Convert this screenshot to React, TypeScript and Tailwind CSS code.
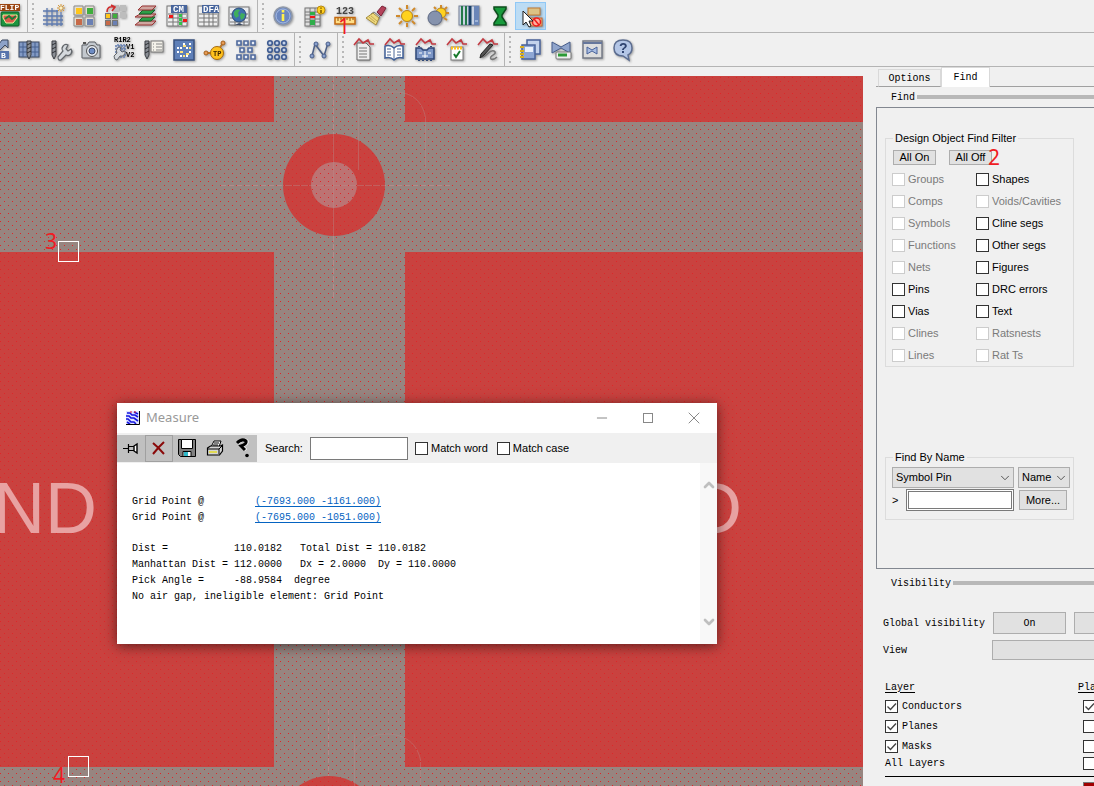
import { useState } from 'react'
import type { ReactNode } from 'react'
import { Minus, X, ChevronDown, ChevronUp } from 'lucide-react'

const SANS = "font-['Liberation_Sans',Arial,sans-serif] text-[11px]"
const MONO = "font-['Liberation_Mono',monospace] text-[10px]"

interface Tool {
  name: string
  art: ReactNode
  active?: boolean
}

const B = '#5f7bb0'
const D = '#3d4a63'

const redWave = <path d="M3 7 8 1l4 4 5-3 2 4h4" fill="none" stroke="#c23a42" strokeWidth="1.6" />
const via = (x: number) => (
  <g>
    <path d={`M${x} 3h4v14l-2 4-2-4z`} fill="#8b8f96" stroke="#3c3f44" />
    <path d={`M${x} 7l4-2M${x} 11l4-2M${x} 15l4-2`} stroke="#2d2f33" />
  </g>
)
const wrench = (
  <path d="m10 19 5-6a4 4 0 0 1 5-6l-2 4 2 2 3-2a4 4 0 0 1-5 6l-5 5q-3 1-3-3z" fill="#d5d9dd" stroke="#62666b" strokeWidth="1.2" />
)
const tableCells = (
  <path d="M3 10h18M3 14h18M3 18h18M8 6v16M13 6v16M17 6v16" stroke="#777" fill="none" />
)

const ROW1: Tool[][] = [
  [
    { name: 'Flip board', art: (
      <>
        <rect x="4" y="8" width="18" height="14" rx="1" fill="#1d9440" stroke="#0e5c26" />
        <path d="M6 11h14v3l-4 5H9l-3-5z" fill="#db5a4b" stroke="#f3e9a0" />
        <path d="m8 15 4-3 3 3 4-3" stroke="#1d7a35" strokeWidth="2" fill="none" />
        <rect x="2" y="0" width="21" height="7" fill="#9a4410" />
        <text x="3" y="6" fontSize="8" fontWeight="bold" fill="#fff" fontFamily="Liberation Mono">FLIP</text>
      </>
    ) },
  ],
  [
    { name: 'Grid toggle', art: (
      <>
        <path d="M6 4v18M11 4v18M16 6v16M20 8v14M2 7h15M2 12h20M2 16h20M2 20h20" stroke={B} strokeWidth="1.3" />
        <path d="M20 0v8M16 4h8M17 1l6 6M23 1l-6 6" stroke="#d99a3a" />
        <circle cx="20" cy="4" r="1.5" fill="#fff3c0" />
      </>
    ) },
    { name: 'Color dialog', art: (
      <>
        <path d="M2 2h9v9H2zM13 2h9v9h-9zM2 13h9v9H2zM13 13h9v9h-9z" fill="#e4dfd2" stroke="#8b8b8b" />
        <rect x="4" y="4" width="6" height="6" fill="#ffc61a" />
        <rect x="15" y="4" width="6" height="6" fill="#3fae3c" />
        <rect x="4" y="15" width="6" height="6" fill="#c76a48" />
        <rect x="15" y="15" width="6" height="6" fill="#6a80b4" />
      </>
    ) },
    { name: 'Swap colors', art: (
      <>
        <path d="M10 1h6v6h-6zM17 1h6v6h-6zM17 8h6v6h-6z" fill="#bdbdbd" />
        <g stroke="#777">
          <rect x="2.5" y="9.5" width="5" height="5" fill="#ffc61a" />
          <rect x="9.5" y="9.5" width="5" height="5" fill="#3fae3c" />
          <rect x="2.5" y="16.5" width="5" height="5" fill="#c76a48" />
          <rect x="9.5" y="16.5" width="5" height="5" fill="#6a80b4" />
        </g>
        <path d="M4 8c0-4 2-6 7-5M8 1l4 2-3 4" fill="none" stroke="#cf2c2c" strokeWidth="1.6" />
      </>
    ) },
    { name: 'Cross section', art: (
      <>
        <path d="m1 21 5-4h16l-4 4z" fill="#cfa6a0" stroke="#9a3434" />
        <path d="m5 17 4-4h12l-4 4z" fill="#2e9e48" stroke="#17602a" />
        <path d="m1 13 5-3h16l-4 3z" fill="#cfa6a0" stroke="#9a3434" />
        <path d="m5 10 4-4h12l-4 4z" fill="#2e9e48" stroke="#17602a" />
        <path d="m4 6 4-4h14l-4 4z" fill="#cfa6a0" stroke="#9a3434" />
      </>
    ) },
    { name: 'Constraint manager', art: (
      <>
        <rect x="2" y="2" width="20" height="20" fill="#eee" stroke="#777" />
        {tableCells}
        <path d="M14 10h3v3h-3zM14 14h3v3h-3zM14 18h3v3h-3z" fill="#35c04a" />
        <path d="M4 11h4v3H4zM18 15h4v3h-4z" fill="#f01818" />
        <rect x="6" y="1" width="16" height="8" fill="#47659c" />
        <text x="8" y="8" fontSize="9" fontWeight="bold" fill="#fff" fontFamily="Liberation Mono">CM</text>
      </>
    ) },
    { name: 'DFA table', art: (
      <>
        <rect x="2" y="2" width="20" height="20" fill="#eee" stroke="#777" />
        {tableCells}
        <rect x="6" y="1" width="17" height="8" fill="#47659c" />
        <text x="7" y="8" fontSize="9" fontWeight="bold" fill="#fff" fontFamily="Liberation Mono">DFA</text>
      </>
    ) },
    { name: 'DRC world', art: (
      <>
        <rect x="2" y="3" width="20" height="18" fill="#e8eaee" stroke="#777" />
        {tableCells}
        <circle cx="12" cy="11" r="7" fill="#3f6fae" stroke="#2a4a78" />
        <path d="M7 8c2-3 4-3 6-2l-2 3 1 3-3 2-2-3zM14 9l4 1-1 4-3 2-1-4z" fill="#3fae5c" />
        <path d="M8 21h8l-4-2z" fill={D} />
      </>
    ) },
  ],
  [
    { name: 'Show element', art: (
      <>
        <circle cx="12" cy="12" r="9" fill="#6b87c0" stroke="#8f98a8" strokeWidth="1.5" />
        <circle cx="12" cy="12" r="7" fill="none" stroke="#a9bce0" />
        <path d="M12 6v2.500M12 10v7" stroke="#fff04a" strokeWidth="2.600" />
      </>
    ) },
    { name: 'Show properties', art: (
      <>
        <rect x="3" y="4" width="15" height="18" fill="#ddd" stroke="#777" />
        <path d="M3 8h15M3 11h15M3 15h15M3 18h15M8 4v18M13 4v18" stroke="#777" />
        <path d="M8 8h5v3H8zM8 16h5v5H8z" fill="#2fae4a" />
        <path d="M8 12h5v2H8z" fill="#f01818" />
        <circle cx="19" cy="6" r="4" fill="#ffd01e" stroke="#b88a10" />
        <path d="M19 3.500v1.200M19 6v3" stroke="#704d00" strokeWidth="1.400" />
      </>
    ) },
    { name: 'Measure', art: (
      <>
        <text x="3" y="10" fontSize="10" fontWeight="bold" fill="#444" fontFamily="Liberation Mono">123</text>
        <rect x="2" y="13.500" width="20" height="6.500" fill="#ffdf8a" stroke="#c46a10" strokeWidth="1.500" />
        <path d="M5 14v3M8 14v2M11 14v3M14 14v2M17 14v3M20 14v2" stroke="#8a4a08" />
      </>
    ) },
    { name: 'Highlight', art: (
      <>
        <path d="m13 8 5-6 4 2-5 8z" fill="#b5425a" stroke="#7c2438" />
        <path d="m10 8 6 5-2 3-7-6z" fill="#ddd" stroke="#777" />
        <path d="m9 9 6 5-3 7L2 14z" fill="#efd97c" stroke="#a58c3a" />
        <path d="m5 13 6 5M7 12l6 5" stroke="#c5ab58" />
      </>
    ) },
    { name: 'Dehighlight', art: (
      <>
        <path d="M12 1v4M12 19v4M1 12h4M19 12h4M4 4l3 3M17 17l3 3M20 4l-3 3M4 20l3-3" stroke="#d08a2c" strokeWidth="2" />
        <circle cx="12" cy="12" r="5.500" fill="#ffd21f" stroke="#b98218" />
      </>
    ) },
    { name: 'Shadow mode', art: (
      <>
        <path d="M15 1v3M23 9h-3M21 3l-3 3M8 3l2 2M21 16l-3-2" stroke="#d08a2c" strokeWidth="2" />
        <circle cx="15" cy="9" r="5" fill="#ffd21f" stroke="#b98218" />
        <circle cx="9" cy="14" r="7" fill="#8592ad" stroke="#5c6883" />
      </>
    ) },
    { name: 'Layer colors', art: (
      <>
        <rect x="2" y="2" width="20" height="19" fill="#c9d3e4" stroke="#77829a" />
        <path d="M5 2v19M9 2v19" stroke="#237a4a" strokeWidth="2" />
        <path d="M13 2v19" stroke="#173f66" strokeWidth="3" />
        <path d="M17 2h5v19h-5z" fill="#6a86b8" />
        <path d="M18 17h3" stroke="#d4e2f8" />
      </>
    ) },
    { name: 'Waive DRC', art: (
      <path d="M6 3h12v2l-4 6v2l4 6v2H6v-2l4-6v-2L6 5z" fill="#189a3c" stroke="#0c4d1c" strokeWidth="1.500" />
    ) },
    { name: 'Selection filter', active: true, art: (
      <>
        <rect x="9" y="4" width="12" height="7" fill="#dcc184" stroke="#c07a34" />
        <rect x="11" y="14" width="12" height="8" fill="#e9b184" stroke="#c0642c" />
        <circle cx="17.500" cy="18" r="4" fill="#ffb0a0" stroke="#ee1c1c" strokeWidth="1.500" />
        <path d="m15 15 5 6" stroke="#ee1c1c" strokeWidth="1.500" />
        <path d="M4 7v14l3-3 3 5 2-1-2-5h4z" fill="#fff" stroke="#222" />
      </>
    ) },
  ],
]

const ROW2: Tool[][] = [
  [
    { name: 'Back annotate', art: (
      <>
        <path d="m10 10 6-8h6v8l-3-3-6 6z" fill="#8da2c8" stroke={D} />
        <rect x="11" y="13" width="12" height="8" fill="#5874ac" />
        <text x="15" y="20" fontSize="8" fontWeight="bold" fill="#fff" fontFamily="Liberation Mono">B</text>
      </>
    ) },
    { name: 'Via structure', art: (
      <>
        <rect x="2" y="4" width="20" height="15" fill="#8199c4" stroke={D} />
        <path d="M2 9h20M2 14h20M6 4v15M18 4v15" stroke="#46608f" />
        {via(10)}
      </>
    ) },
    { name: 'Padstack edit', art: <>{via(4)}{wrench}</> },
    { name: 'Snapshot', art: (
      <>
        <path d="M3 7h5l2-3h6l2 3h3v13H3z" fill="#c3c8ce" stroke="#5c6066" />
        <circle cx="13" cy="13" r="5.500" fill="#e6eaf0" stroke="#555" />
        <circle cx="13" cy="13" r="3" fill="#6d8cc4" stroke="#3c4a66" />
        <path d="M4 5h3" stroke="#555" strokeWidth="2" />
      </>
    ) },
    { name: 'Refdes wrench', art: (
      <>
        <path d="M8 6v14M11 6v14M14 6v14M5 8h11M5 11h11M5 14h11M5 17h11" stroke={B} strokeWidth="1.300" strokeDasharray="2 1" />
        <g fontSize="7" fontWeight="bold" fill="#000" fontFamily="Liberation Mono">
          <text x="4" y="4">R1R2</text>
          <text x="16" y="11">V1</text>
          <text x="16" y="19">V2</text>
        </g>
        <path d="m4 18 3-3a4 4 0 0 1 4-6l-1 3 2 2 3-1a4 4 0 0 1-5 5l-3 4q-3 0-3-4z" fill="#d5d9dd" stroke="#62666b" />
      </>
    ) },
    { name: 'Padstack report', art: (
      <>
        {via(4)}
        <rect x="10" y="3" width="12" height="11" fill="#f4f2ea" stroke="#777" />
        <path d="M12 6h1M15 6h6M12 9h1M15 9h6M12 12h1M15 12h6" stroke="#888" />
      </>
    ) },
    { name: 'Ball map', art: (
      <>
        <rect x="2" y="2" width="20" height="20" fill="#5f80b8" stroke="#3a527f" strokeWidth="1.500" />
        <path d="M11 6h2M17 6h2M5 10h2M8 10h2M14 10h2M5 14h2M17 14h2M8 18h2M14 18h2" stroke="#fff" strokeWidth="2" />
        <path d="M11 8h3M8 14h3M14 16h3M11 18h2M17 10h2" stroke="#ffe27a" strokeWidth="2" />
      </>
    ) },
    { name: 'Test point', art: (
      <>
        <path d="M3 15h6l5-1 6-9" fill="none" stroke="#b9742a" strokeWidth="2" />
        <circle cx="20" cy="5" r="2" fill="#e79b55" stroke="#a5601c" />
        <circle cx="3" cy="15" r="2" fill="#e79b55" stroke="#a5601c" />
        <circle cx="14" cy="15" r="6.500" fill="#ffc21e" stroke="#a56a10" />
        <text x="10" y="18" fontSize="7" fontWeight="bold" fill="#402800" fontFamily="Liberation Mono">TP</text>
      </>
    ) },
    { name: 'Place array', art: (
      <g fill="#e8edf6" stroke="#4f6a9e" strokeWidth="1.600">
        <path d="M3 3h4v4H3zM10 3h4v4h-4zM17 3h4v4h-4zM6 10h4v4H6zM14 10h4v4h-4zM3 17h4v4H3zM10 17h4v4h-4zM17 17h4v4h-4z" />
      </g>
    ) },
    { name: 'Place grid', art: (
      <g fill="#c5d3ea" stroke="#3f5c92" strokeWidth="1.600">
        {[5, 12, 19].map(y => [5, 12, 19].map(x => <circle key={`${x}-${y}`} cx={x} cy={y} r="2.300" />))}
      </g>
    ) },
  ],
  [
    { name: 'Net schedule', art: (
      <>
        <path d="M4 18 7 6l9 12 4-13" fill="none" stroke="#4c5f86" strokeWidth="1.500" />
        <g fill="#8aa0cc" stroke="#4a5f8c">
          <circle cx="4" cy="18" r="2" /><circle cx="8" cy="6" r="2" /><circle cx="16" cy="18" r="2" /><circle cx="20" cy="6" r="2" />
        </g>
      </>
    ) },
  ],
  [
    { name: 'Signal report', art: (
      <>
        <path d="M6 5h9l4 4v13H6z" fill="#eee" stroke="#666" />
        <path d="M8 10h8M8 13h8M8 16h8M8 19h8" stroke="#777" />{redWave}
      </>
    ) },
    { name: 'Signal library', art: (
      <>
        <path d="M3 8c4-1 7 0 9 2 2-2 5-3 9-2v12c-4-1-7 0-9 2-2-2-5-3-9-2z" fill="#fff" stroke="#3f5f98" strokeWidth="1.500" />
        <path d="M12 10v11M5 11h4M5 14h4M5 17h4M15 11h4M15 14h4M15 17h4" stroke="#4c6898" />{redWave}
      </>
    ) },
    { name: 'Signal model', art: (
      <>
        <path d="M3 10h5l2 2h4l2-2h5v11H3z" fill="#7c96c6" stroke="#2f4878" strokeWidth="1.500" />
        <path d="M6 15h3M15 15h3M12 13v7M9 18h6" stroke="#fff" />
        <path d="M6 22v1M10 22v1M14 22v1M18 22v1M6 9V8M18 9V8" stroke="#2f4878" strokeWidth="2" />{redWave}
      </>
    ) },
    { name: 'Signal audit', art: (
      <>
        <rect x="7" y="9" width="12" height="13" fill="#fff" stroke="#777" />
        <path d="M7 10h12" stroke="#ffc21e" strokeWidth="3" strokeDasharray="2 1" />
        <path d="m10 16 2 3 4-6" fill="none" stroke="#187a2c" strokeWidth="2" />{redWave}
      </>
    ) },
    { name: 'Signal probe', art: (
      <>
        <path d="M6 19c5 1 8-8 13-6 5 3-6 5-3 8 2 1 4 0 6-2" fill="none" stroke="#777" strokeWidth="1.500" />
        <path d="m18 7-9 10-4 3 1-4 9-10z" fill="#555" stroke="#222" />{redWave}
      </>
    ) },
  ],
  [
    { name: 'Cascade windows', art: (
      <>
        <rect x="9" y="2" width="13" height="14" fill="#c3d2ec" stroke="#49639a" strokeWidth="1.500" />
        <rect x="4" y="7" width="13" height="14" fill="#8fa7d4" stroke="#49639a" strokeWidth="1.500" />
        <path d="M7 9h8v5H7z" fill="#e9f0fb" />
        <path d="M2 9h4M2 13h4M2 16h4M2 19h4" stroke="#d9ae1e" strokeWidth="2" />
      </>
    ) },
    { name: 'Simulation progress', art: (
      <>
        <path d="m3 4 9 5 9-5v11l-9-5-9 5z" fill="#90a5cc" stroke="#465c8a" />
        <rect x="7" y="14" width="15" height="7" rx="1" fill="#eee" stroke="#777" />
        <path d="M9 17h9" stroke="#2c9a36" strokeWidth="3" />
      </>
    ) },
    { name: 'Simulation window', art: (
      <>
        <rect x="3" y="3" width="19" height="17" fill="#ddd" stroke="#747a86" strokeWidth="1.500" />
        <path d="M3 5h19" stroke="#66779c" strokeWidth="2" />
        <path d="m7 9 5 3 5-3v7l-5-3-5 3z" fill="#a9bde2" stroke="#49639a" />
      </>
    ) },
    { name: 'Help', art: (
      <>
        <path d="M12 2c6 0 9 3 9 8 0 4-2 6-4 7l1 5-6-4c-6 0-9-3-9-8s3-8 9-8z" fill="#b4c6e6" stroke="#5c6d90" strokeWidth="1.500" />
        <text x="8" y="15" fontSize="14" fontWeight="bold" fill="#2f4370" fontFamily="Liberation Sans">?</text>
      </>
    ) },
  ],
]

const FILTERS: Array<[string, boolean, string, boolean]> = [
  ['Groups', false, 'Shapes', true],
  ['Comps', false, 'Voids/Cavities', false],
  ['Symbols', false, 'Cline segs', true],
  ['Functions', false, 'Other segs', true],
  ['Nets', false, 'Figures', true],
  ['Pins', true, 'DRC errors', true],
  ['Vias', true, 'Text', true],
  ['Clines', false, 'Ratsnests', false],
  ['Lines', false, 'Rat Ts', false],
]

function ToolButton({ tool }: { tool: Tool }) {
  return (
    <button
      aria-label={tool.name}
      className={`flex h-7 w-[31px] shrink-0 items-center justify-center ${tool.active ? 'border border-[#90c8f6] bg-[#bcdcf4]' : ''}`}
    >
      <svg viewBox="0 0 24 24" className="size-6 shrink-0 overflow-visible drop-shadow-[1px_1px_1px_rgba(0,0,0,0.35)]">{tool.art}</svg>
    </button>
  )
}

function Toolbar({ groups, className, divider }: { groups: Tool[][]; className: string; divider: string }) {
  return (
    <div className={`flex items-center border-b border-[#b4b4b4] ${className}`}>
      {groups.map((group, i) => (
        <div key={i} className="flex h-full items-center">
          {i > 0 && (
            <div className={`flex h-full gap-1 pr-[3px] ${divider}`}>
              <div className="w-px bg-[#b4b4b4]" />
              <div className="my-[3px] w-[2px] bg-[repeating-linear-gradient(180deg,#b8b8b8_0px,#b8b8b8_2px,#f0f0f0_2px,#f0f0f0_5px)]" />
            </div>
          )}
          {group.map(t => <ToolButton key={t.name} tool={t} />)}
        </div>
      ))}
    </div>
  )
}

function Check({ label, enabled = true, initial = false, hideLabel = false, gap = 'gap-[3px]' }: {
  label: string; enabled?: boolean; initial?: boolean; hideLabel?: boolean; gap?: string
}) {
  const [on, setOn] = useState(initial)
  return (
    <label className={`flex items-center whitespace-nowrap ${gap} ${enabled ? 'text-black' : 'text-[#7a7a7a]'}`}>
      <span className="relative size-[13px] shrink-0">
        <input
          type="checkbox"
          checked={on}
          disabled={!enabled}
          aria-label={hideLabel ? label : undefined}
          onChange={e => setOn(e.target.checked)}
          className="block size-[13px] appearance-none border border-[#333] bg-white disabled:border-[#ccc]"
        />
        {on && (
          <svg viewBox="0 0 13 13" className="pointer-events-none absolute inset-0">
            <path d="m2.500 6.500 3 3 5.500-6" fill="none" stroke="#444" strokeWidth="1.400" />
          </svg>
        )}
      </span>
      {!hideLabel && <span>{label}</span>}
    </label>
  )
}

function Pad({ cx, cy }: { cx: number; cy: number }) {
  return (
    <g>
      <circle cx={cx} cy={cy} r="51" fill="#c9423f" />
      <circle cx={cx} cy={cy} r="23" fill="#bc7373" />
    </g>
  )
}

function BoardCanvas() {
  return (
    <svg className="block h-full w-full" role="img" aria-label="Board layout">
      <defs>
        <pattern id="dots" width="8" height="8" patternUnits="userSpaceOnUse">
          <path d="M0 1h1v1H0zM4 5h1v1H4z" fill="#dd2729" />
        </pattern>
      </defs>
      <rect width="100%" height="100%" fill="#c9423f" />
      <rect x="274" width="131" height="100%" fill="#978580" />
      <rect y="46" width="100%" height="130" fill="#978580" />
      <rect y="691" width="100%" height="130" fill="#978580" />
      <g fill="none" stroke="#b98c8c" strokeOpacity="0.8">
        <path d="M333.500 0v222M220 109.500h231" strokeDasharray="6 2" />
        <path d="M328.500 633v80" strokeDasharray="6 2" />
      </g>
      <Pad cx={334} cy={109} />
      <Pad cx={329} cy={751} />
      <g fill="none" stroke="#b98c8c" strokeOpacity="0.4">
        <path d="M333.500 58v102M283 109.500h102" />
        <path d="M358.500 16v78M358.500 36c8-14 20-20 36-20s28 8 31 26v50" />
        <path d="M354.500 658v60M354.500 676c8-12 18-18 32-18s30 6 34 26v40" />
      </g>
      <rect width="100%" height="100%" fill="url(#dots)" />
      <g fill="#e8a2a2" fontFamily="Liberation Sans" fontSize="72" textAnchor="end">
        <text x="97" y="457">GND</text>
        <text x="742" y="457">GND</text>
      </g>
      <g fill="none" stroke="#fff">
        <rect x="58.500" y="165.500" width="20" height="20" />
        <rect x="68.500" y="680.500" width="20" height="20" />
      </g>
      <g fill="#f01c24" fontFamily="Noto Sans" fontSize="21">
        <text x="45" y="173">3</text>
        <text x="53" y="707">4</text>
      </g>
    </svg>
  )
}

function MeasureWindow() {
  const tile = 'flex h-[27px] w-7 items-center justify-center bg-[#c0c0c0]'
  return (
    <section className="absolute left-[117px] top-[327px] flex h-[241px] w-[600px] flex-col bg-white shadow-[0_2px_12px_rgba(0,0,0,0.55)]">
      <header className="flex h-[30px] shrink-0 items-center pl-[9px]">
        <svg viewBox="0 0 14 14" className="size-[14px]">
          <path d="M0 0h13v13H0z" fill="#dfe4ff" />
          <path d="M1 2h3l2 2h3l3 2M0 5h3l2 2h3l4 3M0 8h2l3 3h3l2 2M8 1l4 2M1 11l3 2" fill="none" stroke="#1414e0" strokeWidth="1.600" />
          <path d="M4 1h2M8 1h2" stroke="#f02020" />
          <path d="M0 13.500h13.500V0" fill="none" stroke="#000" />
        </svg>
        <h2 className="ml-[6px] flex-1 font-['Noto_Sans',sans-serif] text-[13px] text-[#999]">Measure</h2>
        <button aria-label="Minimize" className="flex w-[46px] justify-center text-[#888]"><Minus size={16} strokeWidth={1.5} /></button>
        <button aria-label="Maximize" className="flex w-[46px] justify-center"><span className="size-[10px] border border-[#888]" /></button>
        <button aria-label="Close" className="flex w-[46px] justify-center text-[#888]"><X size={20} strokeWidth={1.2} /></button>
      </header>

      <div className={`flex h-[30px] shrink-0 items-center bg-[#f0f0f0] ${SANS}`}>
        <button aria-label="Pin" className={tile}>
          <svg viewBox="0 0 16 16" className="size-4">
            <path d="M0 8.500h5M5.500 4v9M6 6.500h5M6 10.500h5" fill="none" stroke="#000" strokeWidth="1.200" />
            <path d="m11 6 3-2v9l-3-2z" fill="#fff" stroke="#000" strokeWidth="1.400" />
          </svg>
        </button>
        <button aria-label="Close report" className={`${tile} border border-[#a0a0a0]`}>
          <svg viewBox="0 0 16 16" className="size-4">
            <path d="m2 3 5 4.500L13 14M13 2 8 7l-6 7" fill="none" stroke="#8a0a0a" strokeWidth="2" />
          </svg>
        </button>
        <button aria-label="Save" className={tile}>
          <svg viewBox="0 0 18 18" className="size-[18px]">
            <path d="M.5.500h17v17h-15l-2-2z" fill="#808080" stroke="#000" />
            <path d="M3.500.500h11v9h-11z" fill="#fff" stroke="#000" />
            <path d="M5 12.500h8v5H5z" fill="#fff" stroke="#000" />
            <path d="M6 13h4v4H6z" fill="#30b8c8" />
          </svg>
        </button>
        <button aria-label="Print" className={tile}>
          <svg viewBox="0 0 18 18" className="size-[18px]">
            <path d="m5 8 3-6h7l-2 6" fill="#fff" stroke="#000" />
            <path d="M8 4h5M7 6h5" stroke="#000" />
            <path d="m1.500 9 3-2h10l2-1v6l-3 4h-12z" fill="#d4d4d4" stroke="#000" strokeWidth="1.200" />
            <path d="M2 10h11l3-3M13 10v5" fill="none" stroke="#000" />
            <path d="M3 13h8" stroke="#e6dd28" strokeWidth="1.500" />
          </svg>
        </button>
        <button aria-label="Help" className={tile}>
          <svg viewBox="0 0 16 20" className="h-5 w-4">
            <path d="M3 5q5-5 9-2 1 3-5 5l4 4" fill="none" stroke="#fff" strokeWidth="3" />
            <path d="M2 5q5-5 9-2 1 3-5 5l4 4" fill="none" stroke="#000" strokeWidth="3" />
            <circle cx="12" cy="17.500" r="1.800" fill="#000" />
          </svg>
        </button>
        <label htmlFor="search" className="ml-2 w-[45px]">Search:</label>
        <input id="search" className="mr-[7px] h-[23px] w-[98px] border border-[#7a7a7a] bg-white px-1" />
        <Check label="Match word" />
        <div className="ml-[9px]"><Check label="Match case" /></div>
      </div>

      <div className="flex min-h-0 flex-1">
        <div className={`flex-1 whitespace-pre pl-[15px] pt-[31px] leading-4 text-black ${MONO}`}>
          {['(-7693.000 -1161.000)', '(-7695.000 -1051.000)'].map(point => (
            <div key={point} className="flex">
              <span className="w-[123px]">Grid Point @</span>
              <a href="#point" className="text-[#0563c1] underline underline-offset-2">{point}</a>
            </div>
          ))}
          <p className="mt-[15px]">{'Dist =           110.0182   Total Dist = 110.0182'}</p>
          <p>{'Manhattan Dist = 112.0000   Dx = 2.0000  Dy = 110.0000'}</p>
          <p>{'Pick Angle =     -88.9584  degree'}</p>
          <p>No air gap, ineligible element: Grid Point</p>
        </div>
        <div className="flex w-[17px] flex-col items-center justify-between bg-[#f8f8f8] pb-[14px] pt-[14px] text-[#bfbfbf]">
          <ChevronUp size={16} strokeWidth={4} />
          <ChevronDown size={16} strokeWidth={4} />
        </div>
      </div>
    </section>
  )
}

function PanelTitle({ children }: { children: ReactNode }) {
  return (
    <div className={`flex h-4 items-center gap-[2px] pl-[15px] text-black ${MONO}`}>
      <h3>{children}</h3>
      <div className="h-1 flex-1 bg-[#b8b8b8]" />
    </div>
  )
}

function Dropdown({ label, value, className }: { label: string; value: string; className: string }) {
  return (
    <div className={`relative ${className}`}>
      <select aria-label={label} className="block h-[21px] w-full appearance-none border border-[#adadad] bg-[#e1e1e1] pl-[3px] text-black">
        <option>{value}</option>
      </select>
      <ChevronDown size={14} strokeWidth={1.5} className="pointer-events-none absolute right-[2px] top-1 text-[#444]" />
    </div>
  )
}

function FindPanel() {
  const small = 'block h-[15px] w-[43px] border border-[#adadad] bg-[#e1e1e1] leading-none'
  return (
    <div className={`mt-[2px] border-y border-l border-[#828790] pb-12 pl-2 pt-[22px] text-black ${SANS}`}>
      <fieldset className="w-[189px] border border-[#dcdcdc] pl-[6px]">
        <legend className="ml-px px-[2px] leading-4">Design Object Find Filter</legend>
        <div className="mb-[3px] mt-1 flex gap-[13px] pl-px">
          <button className={small}>All On</button>
          <div className="relative">
            <button className={small}>All Off</button>
            <span className="absolute -top-2 left-[39px] font-['Noto_Sans',sans-serif] text-[21px] leading-[30px] text-[#f01c24]">2</span>
          </div>
        </div>
        {FILTERS.map(([left, leftOn, right, rightOn]) => (
          <div key={left} className="flex h-[22px] items-center">
            <div className="w-[84px]"><Check label={left} enabled={leftOn} /></div>
            <Check label={right} enabled={rightOn} />
          </div>
        ))}
      </fieldset>

      <fieldset className="mt-[82px] w-[189px] border border-[#dcdcdc] pb-2 pl-[6px]">
        <legend className="ml-px px-[2px] leading-4">Find By Name</legend>
        <div className="mt-[2px] flex gap-1">
          <Dropdown label="Object type" value="Symbol Pin" className="w-[122px]" />
          <Dropdown label="Match by" value="Name" className="w-[52px]" />
        </div>
        <div className="mt-px flex items-center">
          <label htmlFor="find-name" className="w-[14px]">&gt;</label>
          <input id="find-name" className="h-[22px] w-[108px] border-[3px] border-double border-[#7a7a7a] bg-white px-1" />
          <button className="ml-[5px] h-5 w-12 border border-[#adadad] bg-[#e1e1e1]">More...</button>
        </div>
      </fieldset>
    </div>
  )
}

function VisibilityPanel() {
  const button = 'shrink-0 border border-[#adadad] bg-[#e1e1e1]'
  const layers: Array<[string, boolean]> = [['Conductors', true], ['Planes', false], ['Masks', false]]
  return (
    <div className={`overflow-hidden whitespace-nowrap pl-[7px] text-black ${MONO}`}>
      <div className="mt-[21px] flex items-center">
        <span className="w-[110px] shrink-0">Global visibility</span>
        <button className={`h-[22px] w-[73px] ${button}`}>On</button>
        <button aria-label="Off" className={`ml-2 h-[22px] w-[73px] ${button}`} />
      </div>
      <div className="mt-[6px] flex items-center">
        <span className="w-[109px] shrink-0">View</span>
        <button aria-label="View" className={`h-5 w-[170px] ${button}`} />
      </div>
      <table className="ml-[2px] mt-[18px] w-[260px] table-fixed text-left">
        <thead>
          <tr className="h-[18px]">
            <th className="w-[198px] font-normal underline underline-offset-2">Layer</th>
            <th className="font-normal underline underline-offset-2"><span className="-ml-[5px]">Planes</span></th>
          </tr>
        </thead>
        <tbody>
          {layers.map(([name, on]) => (
            <tr key={name} className="h-5">
              <td><Check label={name} initial gap="gap-1" /></td>
              <td><Check label={`${name} plane`} initial={on} hideLabel /></td>
            </tr>
          ))}
          <tr className="h-5 border-b border-black">
            <td className="pb-1">All Layers</td>
            <td className="pb-1"><Check label="All planes" hideLabel /></td>
          </tr>
          <tr className="h-6">
            <td className="pt-1">Top</td>
            <td><div className="h-3 w-4 border border-[#777] bg-[#a00000]" /></td>
          </tr>
        </tbody>
      </table>
    </div>
  )
}

export default function App() {
  return (
    <div className="flex h-screen flex-col overflow-hidden bg-[#f0f0f0]">
      <nav className="relative shrink-0 overflow-hidden">
        <Toolbar groups={ROW1} className="h-[33px] [&>*:first-child]:-ml-[7px]" divider="pl-[3px]" />
        <Toolbar groups={ROW2} className="h-[34px] [&>*:first-child]:-ml-[18px]" divider="pl-[2px]" />
        <span className="absolute left-[338px] top-[11px] font-['Noto_Sans',sans-serif] text-[21px] leading-[30px] text-[#f01c24]">1</span>
      </nav>

      <div className="flex min-h-0 flex-1">
        <main className="min-w-0 flex-1 pt-[9px]">
          <div className="relative h-full overflow-hidden">
            <BoardCanvas />
            <MeasureWindow />
          </div>
        </main>

        <aside className="w-[231px] shrink-0 overflow-hidden pl-[13px]">
          <div role="tablist" className={`flex h-5 items-end text-black ${MONO}`}>
            <div className="w-[2px] self-stretch border-b border-[#a0a0a0]" />
            <button role="tab" aria-selected="false" className="h-[18px] w-[63px] border border-[#d9d9d9] border-b-[#a0a0a0]">Options</button>
            <button role="tab" aria-selected="true" className="h-5 w-[49px] border border-b-0 border-[#d9d9d9] bg-white">Find</button>
            <div className="flex-1 self-stretch border-b border-[#a0a0a0]" />
          </div>
          <div className="mt-[2px]"><PanelTitle>Find</PanelTitle></div>
          <FindPanel />
          <div className="mt-[6px]"><PanelTitle>Visibility</PanelTitle></div>
          <VisibilityPanel />
        </aside>
      </div>
    </div>
  )
}
